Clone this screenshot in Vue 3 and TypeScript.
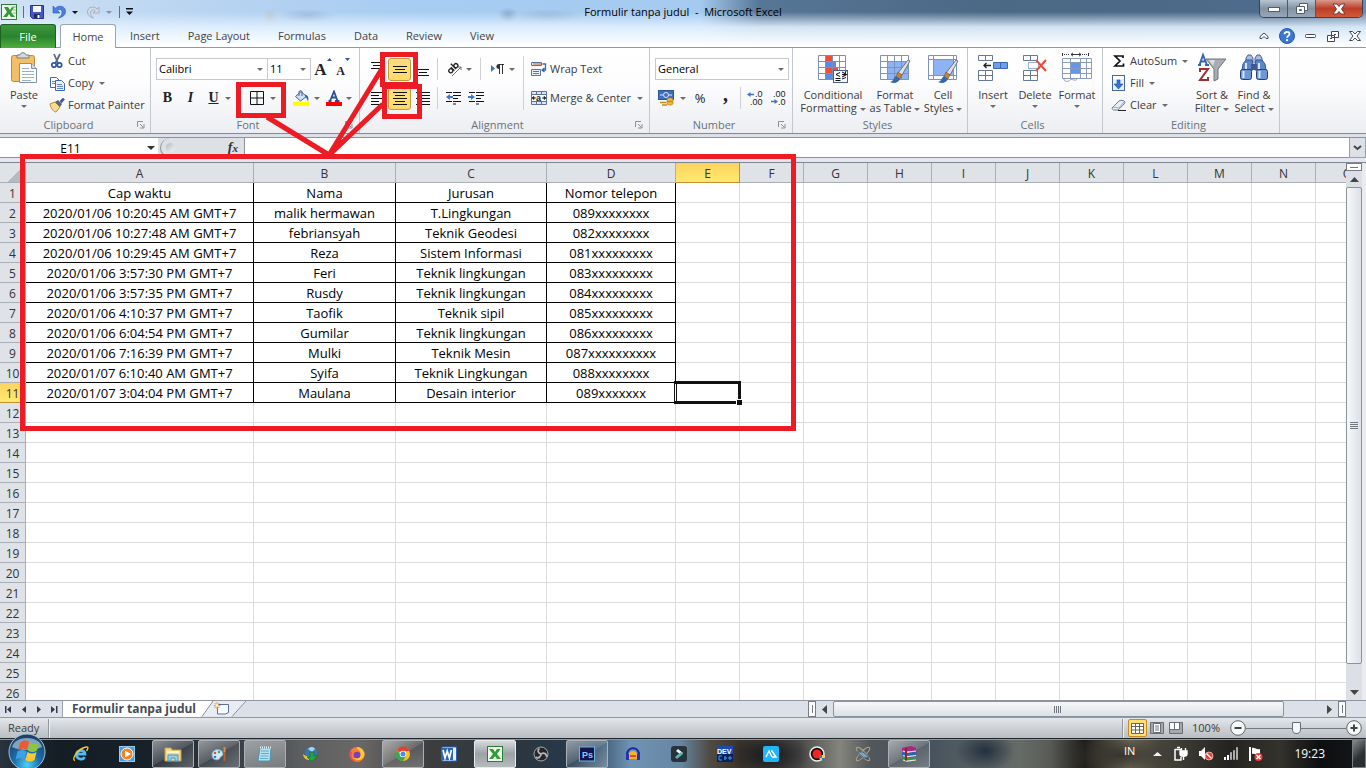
<script setup lang="ts">
import { ref } from 'vue'

interface Column {
  name: string
  cls: string
}

const columns: Column[] = [
  { name: 'A', cls: 'col-a' },
  { name: 'B', cls: 'col-b' },
  { name: 'C', cls: 'col-c' },
  { name: 'D', cls: 'col-d' },
  ...'EFGHIJKLMNO'.split('').map((name) => ({ name, cls: 'col-std' })),
]

const data: string[][] = [
  ['Cap waktu', 'Nama', 'Jurusan', 'Nomor telepon'],
  ['2020/01/06 10:20:45 AM GMT+7', 'malik hermawan', 'T.Lingkungan', '089xxxxxxxx'],
  ['2020/01/06 10:27:48 AM GMT+7', 'febriansyah', 'Teknik Geodesi', '082xxxxxxxx'],
  ['2020/01/06 10:29:45 AM GMT+7', 'Reza', 'Sistem Informasi', '081xxxxxxxxx'],
  ['2020/01/06 3:57:30 PM GMT+7', 'Feri', 'Teknik lingkungan', '083xxxxxxxxx'],
  ['2020/01/06 3:57:35 PM GMT+7', 'Rusdy', 'Teknik lingkungan', '084xxxxxxxxx'],
  ['2020/01/06 4:10:37 PM GMT+7', 'Taofik', 'Teknik sipil', '085xxxxxxxxx'],
  ['2020/01/06 6:04:54 PM GMT+7', 'Gumilar', 'Teknik lingkungan', '086xxxxxxxxx'],
  ['2020/01/06 7:16:39 PM GMT+7', 'Mulki', 'Teknik Mesin', '087xxxxxxxxxx'],
  ['2020/01/07 6:10:40 AM GMT+7', 'Syifa', 'Teknik Lingkungan', '088xxxxxxxx'],
  ['2020/01/07 3:04:04 PM GMT+7', 'Maulana', 'Desain interior', '089xxxxxxx'],
]

const rowCount = 26
const tabs = ['Insert', 'Page Layout', 'Formulas', 'Data', 'Review', 'View']

const nameBox = ref('E11')
const formula = ref('')
const font = ref('Calibri')
const size = ref('11')
const numberFormat = ref('General')
const zoom = ref(100)

const isActive = (row: number, col: number) => row === 11 && col === 4
</script>

<template>
  <div class="desktop">
    <header class="top">
      <div class="titlebar">
        <div class="quick">
          <svg width="16" height="16" viewBox="0 0 16 16"><rect x=".5" y=".5" width="15" height="15" fill="#eef7ea" stroke="#2e7d32" /><path d="M3 3h4l2 3 2-3h2.500L10 8l4 5h-4L8 10l-2 3H2l4-5z" fill="#2f9a3a" /><path d="M11 3h4M12 6h3M12 9h3" stroke="#7fbf7a" /></svg>
          <span class="vline"></span>
          <button aria-label="Save"><svg width="14" height="14" viewBox="0 0 14 14"><path d="M.5.5h13v13h-11l-2-2z" fill="#4a55c8" stroke="#2a3290" /><path d="M3 1h8v6H3z" fill="#f4f7ff" /><path d="M4 9h6v4H4z" fill="#222a60" /><path d="M7.500 10h2v3h-2z" fill="#fff" /></svg></button>
          <button class="undo" aria-label="Undo"><svg width="14" height="14" viewBox="0 0 14 14"><path d="M1 1v7h7L5.500 5.500C8 3.500 10 4.500 10 7.500c0 2-1 3.500-3.500 5.500 5-1 7-3.500 7-6.700C13.500 1 7-.5 3.200 3.200z" fill="#4a7fe0" stroke="#2a58b0" stroke-width=".6" /></svg></button>
          <i class="dd dark"></i>
          <button class="redo" aria-label="Redo"><svg width="13" height="13" viewBox="0 0 13 13"><path d="M12 1v6H6l2.200-2.200C6 3 3.500 4 3.500 7c0 2 1 3.500 3 5C2.500 11 .5 9 .5 5.800.5 1 6.500-.5 10 3z" fill="#d3dae2" stroke="#9aa7b6" stroke-width=".8" /></svg></button>
          <i class="dd pale"></i>
          <span class="vline"></span>
          <svg width="8" height="8" viewBox="0 0 8 8"><path d="M0 0h7v1.500H0zM0 3.500h7L3.500 7z" fill="#111" /></svg>
        </div>
        <span class="title">Formulir tanpa judul&nbsp; -&nbsp; Microsoft Excel</span>
        <div class="winctl">
          <button aria-label="Minimize"><svg width="14" height="8" viewBox="0 0 14 8"><rect x="1.500" y="2.500" width="11" height="4" fill="#fff" stroke="#555e6a" /></svg></button>
          <button aria-label="Restore"><svg width="14" height="13" viewBox="0 0 14 13"><path d="M4.500 1.500h8v7h-8z" fill="#fff" stroke="#555e6a" /><path d="M1.500 4.500h8v7h-8z" fill="#fff" stroke="#555e6a" /><path d="M4.500 7.500h2v1h-2z" fill="#fff" stroke="#555e6a" /></svg></button>
          <button class="close" aria-label="Close"><svg width="14" height="12" viewBox="0 0 14 12"><path d="M1 1h4l2 2.500L9 1h4L9.500 6l3.500 5H9L7 8.500 5 11H1l3.500-5z" fill="#fff" stroke="#6b3b3b" /></svg></button>
        </div>
      </div>
      <nav class="tabs">
        <button class="tab file">File</button>
        <button class="tab home">Home</button>
        <button v-for="t in tabs" :key="t" class="tab">{{ t }}</button>
        <span class="fill"></span>
        <div class="helpbar">
          <svg width="10" height="8" viewBox="0 0 10 8"><path d="M1 6.500V4.500L5 1l4 3.500v2H7L5 4.500 3 6.500z" fill="#fff" stroke="#445" /></svg>
          <svg width="16" height="16" viewBox="0 0 16 16"><circle cx="8" cy="8" r="7.500" fill="#3b76d0" stroke="#2c5aa6" /><path d="M5.500 6.300C5.500 3 10.500 3 10.500 6 10.500 7.800 8 8 8 9.800" fill="none" stroke="#fff" stroke-width="1.800" /><circle cx="8" cy="12.200" r="1.100" fill="#fff" /></svg>
          <svg width="12" height="6" viewBox="0 0 12 6"><rect x=".5" y="1.500" width="10" height="3" rx="1" fill="#fff" stroke="#445" /></svg>
          <svg width="12" height="11" viewBox="0 0 12 11"><path d="M4.500.5h7v6h-7zM.5 4.500h7v6h-7z" fill="#fff" stroke="#445" /><path d="M3 7.500h2M7 3.500h2" stroke="#445" /></svg>
          <svg width="12" height="10" viewBox="0 0 12 10"><path d="M.5.5h3L6 3 8.500.5h3L8 5l3.500 4.500h-3L6 7 3.500 9.500h-3L4 5z" fill="#fff" stroke="#445" /></svg>
        </div>
      </nav>
    </header>

    <section class="ribbon">
      <div class="group clipboard">
        <div class="body">
          <button class="big paste">
            <svg width="28" height="32" viewBox="0 0 28 32"><rect x="1.500" y="3.500" width="23" height="26" rx="2" fill="#f0bf68" stroke="#c4873a" /><path d="M7 6V3h3c0-3 6-3 6 0h3v3z" fill="#d5d8dc" stroke="#777e88" /><path d="M9.500 11.500h12l5 5v14h-17z" fill="#fbfdff" stroke="#7f93ad" /><path d="M21.500 11.500v5h5" fill="#cfdcea" stroke="#7f93ad" /><path d="M12 16.500h7M12 19.500h12M12 22.500h12M12 25.500h12M12 28.500h9" stroke="#9db0c8" /></svg>
            <span>Paste</span><i class="dd"></i>
          </button>
          <div class="stack">
            <button><svg width="16" height="16" viewBox="0 0 16 16"><path d="M5 1l4 9M11 1L6.500 10" stroke="#5c6c80" stroke-width="1.800" /><circle cx="5" cy="12" r="2.200" fill="none" stroke="#2a57a8" stroke-width="1.700" /><circle cx="10.500" cy="12" r="2.200" fill="none" stroke="#2a57a8" stroke-width="1.700" /></svg>Cut</button>
            <button><svg width="16" height="16" viewBox="0 0 16 16"><path d="M1.500 2.500h6l3 3v7h-9z" fill="#fff" stroke="#3f68ac" /><path d="M6.500 5.500h6l3 3v7h-9z" fill="#e8f0ff" stroke="#3f68ac" /><path d="M3 6.500h3M3 8.500h3M8 9.500h5M8 11.500h6M8 13.500h6" stroke="#5f89cf" /></svg>Copy<i class="dd"></i></button>
            <button><svg width="16" height="16" viewBox="0 0 16 16"><path d="M1 7l5-2 5 5-4 5c-2 0-5-3-6-8z" fill="#f6dc91" stroke="#b78b35" /><path d="M6 5l3-2 4 4-2 3z" fill="#5b6470" /><path d="M11 4l3-3 1.500 1.500L12.500 6z" fill="#4c4ca0" stroke="#333d70" stroke-width=".5" /></svg>Format Painter</button>
          </div>
        </div>
        <div class="caption"><span>Clipboard</span><svg width="8" height="8" viewBox="0 0 8 8"><path d="M.5 6V.5H6M3 3l3.500 3.500M7 3v4H3" fill="none" stroke="#8a9099" /></svg></div>
      </div>

      <div class="group font">
        <div class="body rows">
          <div class="row">
            <label class="combo fontname"><select v-model="font" aria-label="Font"><option>Calibri</option></select><i class="dd"></i></label>
            <label class="combo fontsize"><select v-model="size" aria-label="Font size"><option>11</option></select><i class="dd"></i></label>
            <button class="ib grow first" aria-label="Grow font"><span class="serif s16">A</span><svg width="5" height="3" viewBox="0 0 5 3"><path d="M0 3L2.500 0 5 3z" fill="#2d55a5" /></svg></button>
            <button class="ib grow" aria-label="Shrink font"><span class="serif s12">A</span><svg width="5" height="3" viewBox="0 0 5 3"><path d="M0 0h5L2.500 3z" fill="#2d55a5" /></svg></button>
          </div>
          <div class="row">
            <button class="ib serif s14">B</button>
            <button class="ib serif s14 ital">I</button>
            <button class="ib serif s14 under">U</button><i class="dd"></i>
            <button class="ib borders" aria-label="All borders"><svg width="14" height="14" viewBox="0 0 14 14"><path d="M.5.500h13v13H.5zM7 .5v13M.5 7h13" fill="none" stroke="#111" /></svg><i class="dd"></i></button>
            <button class="ib fillc" aria-label="Fill color"><svg width="17" height="16" viewBox="0 0 17 16"><path d="M2.500 6.500l5.500-5 5.500 5-6 4.500z" fill="#cfe0f7" stroke="#45648f" /><path d="M6 6V2c0-1.800 3-1.800 3 0v4" fill="none" stroke="#45648f" /><path d="M12 4.500c3.500 1 4 4 3 7-1-2.500-1.500-4-3-5z" fill="#2f62b5" /><path d="M0 12h16v4H0z" fill="#ff0" /></svg><i class="dd"></i></button>
            <button class="ib fontc" aria-label="Font color"><svg width="16" height="16" viewBox="0 0 16 16"><path d="M2.500 11h3M9 11h4.500M4 11L8 1.500 11.500 11M5.500 7.500h5" fill="none" stroke="#2c4f94" stroke-width="1.800" /><path d="M0 12h16v4H0z" fill="#f00" /></svg><i class="dd"></i></button>
          </div>
        </div>
        <div class="caption"><span>Font</span><svg width="8" height="8" viewBox="0 0 8 8"><path d="M.5 6V.5H6M3 3l3.500 3.500M7 3v4H3" fill="none" stroke="#8a9099" /></svg></div>
      </div>

      <div class="group align">
        <div class="body">
          <div class="rows">
            <div class="row">
              <button class="al" aria-label="Top align"><svg width="14" height="14" viewBox="0 0 14 14"><path d="M1 .5h12M3 3.500h8M1 6.500h12" stroke="#111" /></svg></button>
              <button class="al on" aria-label="Middle align"><svg width="14" height="14" viewBox="0 0 14 14"><path d="M0 4.500h14M2 7.500h10M0 10.500h14" stroke="#111" /></svg></button>
              <button class="al" aria-label="Bottom align"><svg width="14" height="14" viewBox="0 0 14 14"><path d="M1 7.500h12M3 10.500h8M1 13.500h12" stroke="#111" /></svg></button>
              <span class="sep"></span>
              <button class="ib wide" aria-label="Orientation"><svg width="16" height="16" viewBox="0 0 16 16" fill="none" stroke="#222" stroke-width="1.300"><g transform="rotate(-45 7 8)"><circle cx="3.500" cy="7" r="2" /><path d="M6 4.500v5M8.500 2v7.500" /><circle cx="10.700" cy="7" r="2" /></g><path d="M5 15l9-9M11 6h3v3" stroke="#66707c" stroke-width="1" /></svg><i class="dd"></i></button>
              <span class="sep"></span>
              <button class="ib wide" aria-label="Text direction"><svg width="16" height="12" viewBox="0 0 16 12"><path d="M1 2l4 3.500L1 9z" fill="#3f72c5" /><path d="M9.500 11V1.500M12.500 11V1.500M14 1.500H9" fill="none" stroke="#333" /><path d="M9 1C5.500 1 5.500 6 9 6z" fill="#333" /></svg><i class="dd"></i></button>
            </div>
            <div class="row">
              <button class="al" aria-label="Align left"><svg width="14" height="14" viewBox="0 0 14 14"><path d="M1 1.500h12M1 4.500h8M1 7.500h12M1 10.500h8M1 13.500h12" stroke="#111" /></svg></button>
              <button class="al on" aria-label="Center"><svg width="14" height="14" viewBox="0 0 14 14"><path d="M0 1.500h14M2 4.500h10M0 7.500h14M2 10.500h10M0 13.500h14" stroke="#111" /></svg></button>
              <button class="al" aria-label="Align right"><svg width="14" height="14" viewBox="0 0 14 14"><path d="M0 1.500h14M4 4.500h10M0 7.500h14M4 10.500h10M0 13.500h14" stroke="#111" /></svg></button>
              <span class="sep"></span>
              <button class="ib" aria-label="Decrease indent"><svg width="16" height="14" viewBox="0 0 16 14"><path d="M1 1.500h6M8 1.500h8M8 4.500h8M8 7.500h5M1 10.500h6M8 10.500h8M8 13h3" stroke="#111" /><path d="M5 3L1 6l4 3V7h3V5H5z" fill="#3f78d5" /></svg></button>
              <button class="ib" aria-label="Increase indent"><svg width="16" height="14" viewBox="0 0 16 14"><path d="M1 1.500h6M8 1.500h8M8 4.500h8M8 7.500h5M1 10.500h6M8 10.500h8M8 13h3" stroke="#111" /><path d="M3 3l4 3-4 3V7H0V5h3z" fill="#3f78d5" /></svg></button>
            </div>
          </div>
          <span class="sep tall"></span>
          <div class="rows">
            <div class="row"><button class="txt"><svg width="16" height="16" viewBox="0 0 16 16"><path d="M.5 1.500h10v3H.5zM.5 8.500h9v6h-9z" fill="#eef4ff" stroke="#5a7099" /><path d="M2 3h10" stroke="#c3551d" /><path d="M2 10.500h6M2 12.500h6" stroke="#c3551d" /><path d="M12 3h2.500v6H12M13.500 7l-2.500 2 2.500 2" fill="none" stroke="#3969b5" stroke-width="1.300" /></svg>Wrap Text</button></div>
            <div class="row"><button class="txt"><svg width="16" height="16" viewBox="0 0 16 16"><path d="M.5 1.500h15v13H.5zM.5 4.500h15M.5 11.500h15M5.500 1.500v3M10.500 1.500v3M5.500 11.500v3M10.500 11.500v3" fill="#d8e5fa" stroke="#5d7298" /><path d="M1 5h14v6H1z" fill="#fff" /><text x="5" y="10.500" font-family="Liberation Sans" font-size="9" font-weight="bold" fill="#222">a</text><path d="M1 8l2-1.500v3zM15 8l-2-1.500v3zM2 8h3M11 8h3" stroke="#222" stroke-width=".8" fill="#222" /></svg>Merge &amp; Center<i class="dd"></i></button></div>
          </div>
        </div>
        <div class="caption"><span>Alignment</span><svg width="8" height="8" viewBox="0 0 8 8"><path d="M.5 6V.5H6M3 3l3.500 3.500M7 3v4H3" fill="none" stroke="#8a9099" /></svg></div>
      </div>

      <div class="group number">
        <div class="body rows">
          <div class="row"><label class="combo numfmt"><select v-model="numberFormat" aria-label="Number format"><option>General</option></select><i class="dd"></i></label></div>
          <div class="row">
            <button class="ib money" aria-label="Accounting format"><svg width="17" height="16" viewBox="0 0 17 16"><rect x=".5" y=".5" width="15" height="9" fill="#3d6fbe" stroke="#2c549a" /><circle cx="8" cy="5" r="2.500" fill="none" stroke="#dce9ff" /><path d="M2 5h3M11 5h3" stroke="#dce9ff" /><path d="M9 9.500c0-2 6-2 6 0v4c0 2-6 2-6 0z" fill="#f1b93c" stroke="#a87315" stroke-width=".6" /><path d="M9 11.500h6M2 12.500h6M4 15h5" stroke="#c68a1b" stroke-width="1.600" /></svg><i class="dd"></i></button>
            <button class="ib pct">%</button>
            <button class="ib serif s20" aria-label="Comma style">,</button>
            <span class="sep"></span>
            <button class="ib" aria-label="Increase decimal"><svg width="18" height="14" viewBox="0 0 18 14" font-family="Liberation Sans" font-size="9" fill="#222"><path d="M0 3.500L3.500 1v1.700H7v1.600H3.500V6z" fill="#3f72c5" /><text x="8" y="6">.0</text><text x="3" y="14">.00</text></svg></button>
            <button class="ib" aria-label="Decrease decimal"><svg width="18" height="14" viewBox="0 0 18 14" font-family="Liberation Sans" font-size="9" fill="#222"><path d="M8 10.500L4.500 8v1.700H1v1.600h3.500V13z" fill="#3f72c5" /><text x="3" y="6">.00</text><text x="8" y="14">.0</text></svg></button>
          </div>
        </div>
        <div class="caption"><span>Number</span><svg width="8" height="8" viewBox="0 0 8 8"><path d="M.5 6V.5H6M3 3l3.500 3.500M7 3v4H3" fill="none" stroke="#8a9099" /></svg></div>
      </div>

      <div class="group styles">
        <div class="body">
          <button class="big cond">
            <svg width="32" height="32" viewBox="0 0 32 32"><path d="M1.500 3.500h27v24h-27z" fill="#fff" /><path d="M8 4h7v6H8zM8 16h13v6H8z" fill="#ee4d36" /><path d="M8 10h11v6H8zM8 22h7v6H8z" fill="#5a8ae6" /><path d="M1.500 3.500h27v24h-27zM1.500 9.500h27M1.500 15.500h27M1.500 21.500h27M8.500 3.500v24M15.500 3.500v24M22.500 3.500v24" fill="none" stroke="#7c8fb0" /><rect x="16.500" y="18.500" width="14" height="12" fill="#f8faff" stroke="#4c6080" /><path d="M23 20.500l-4 2 4 2M18.500 26.500h5M18.500 28.500h5M25 20l4 2M25 22.500h5M25 25l4-2M25 27l4-1.500M29 19l-2 5" fill="none" stroke="#111" /></svg>
            <span>Conditional</span><span>Formatting <i class="dd"></i></span>
          </button>
          <button class="big fat">
            <svg width="32" height="32" viewBox="0 0 32 32"><path d="M1.500 3.500h28v24h-28z" fill="#fff" /><path d="M8 10h21v18H8z" fill="#8db3f4" /><path d="M1.500 3.500h28v24h-28zM1.500 9.500h28M1.500 15.500h28M1.500 21.500h28M8.500 3.500v24M15.500 3.500v24M22.500 3.500v24" fill="none" stroke="#7c93bb" /><path d="M29 8l2 1-8 14-4-2z" fill="#dde1e6" stroke="#6d7580" /><path d="M19 20l4 3-2 4-4-2z" fill="#c48537" stroke="#7d5321" stroke-width=".6" /><path d="M17 24l4 3c-2 4-6 5-10 3 4-1 3-4 6-6z" fill="#3568ad" /></svg>
            <span>Format</span><span>as Table <i class="dd"></i></span>
          </button>
          <button class="big cst">
            <svg width="32" height="32" viewBox="0 0 32 32"><path d="M1.500 3.500h28v24h-28z" fill="#fff" /><path d="M7 8h19v15H7z" fill="#8db3f4" /><path d="M1.500 3.500h28v24h-28zM1.500 7.500h28M1.500 23.500h28M6.500 3.500v24M26.500 3.500v24" fill="none" stroke="#7c93bb" /><path d="M29 8l2 1-8 14-4-2z" fill="#dde1e6" stroke="#6d7580" /><path d="M19 20l4 3-2 4-4-2z" fill="#c48537" stroke="#7d5321" stroke-width=".6" /><path d="M17 24l4 3c-2 4-6 5-10 3 4-1 3-4 6-6z" fill="#3568ad" /></svg>
            <span>Cell</span><span>Styles <i class="dd"></i></span>
          </button>
        </div>
        <div class="caption"><span>Styles</span></div>
      </div>

      <div class="group cells">
        <div class="body">
          <button class="big">
            <svg width="32" height="32" viewBox="0 0 32 32"><path d="M1.500 3.500h14v5h-14zM8.500 3.500v5M1.500 18.500h14v10h-14zM8.500 18.500v10M1.500 23.500h14" fill="#fff" stroke="#66799b" /><path d="M16.500 10.500h14v6h-14zM23.500 10.500v6" fill="#6e9eee" stroke="#3f67ad" /><path d="M7 13.500h7M9.500 11L7 13.500 9.500 16" fill="none" stroke="#222" stroke-width="1.400" /></svg>
            <span>Insert</span><i class="dd"></i>
          </button>
          <button class="big">
            <svg width="32" height="32" viewBox="0 0 32 32"><path d="M4.500 3.500h14v5h-14zM11.500 3.500v5M4.500 18.500h14v10h-14zM11.500 18.500v10M4.500 23.500h14" fill="#fff" stroke="#66799b" /><path d="M9.500 10.500h10v6h-10z" fill="none" stroke="#2d5cb8" stroke-dasharray="1 1" /><path d="M17 8l10 11M27 8L17 19" stroke="#f04a32" stroke-width="2" /></svg>
            <span>Delete</span><i class="dd"></i>
          </button>
          <button class="big">
            <svg width="32" height="32" viewBox="0 0 32 32"><path d="M1.500 1v3M27.500 1v3M10 2.500h10M12 .8l-2 1.700 2 1.700M18 .8l2 1.700-2 1.700" fill="none" stroke="#333" /><path d="M3 2.500h6M21 2.500h6" stroke="#333" stroke-dasharray="1 1" /><path d="M1.500 6.500h29v20h-29z" fill="#fff" /><path d="M10 11h9v11h-9z" fill="#6496ee" /><path d="M1.500 6.500h29v20h-29zM1.500 10.500h29M1.500 16.500h29M1.500 21.500h29M9.500 6.500v20M19.500 6.500v20M25.500 6.500v20M3 27c0 3 5 3 6 1s6 2 7-1" fill="none" stroke="#8b9cba" /></svg>
            <span>Format</span><i class="dd"></i>
          </button>
        </div>
        <div class="caption"><span>Cells</span></div>
      </div>

      <div class="group editing">
        <div class="body">
          <div class="stack">
            <button><svg width="16" height="16" viewBox="0 0 16 16"><path d="M12 5V3H4l5 5-5 5h8.500v-2.500" fill="none" stroke="#111" stroke-width="1.700" /></svg>AutoSum<i class="dd"></i></button>
            <button><svg width="16" height="16" viewBox="0 0 16 16"><rect x="1.500" y=".5" width="12" height="15" fill="#e7effd" stroke="#4a6797" /><path d="M2 1h11v3H2z" fill="#fff" /><path d="M6 5h3v4h3l-4.500 5L3 9h3z" fill="#356fd8" stroke="#1c4ea8" stroke-width=".6" /></svg>Fill<i class="dd"></i></button>
            <button><svg width="16" height="16" viewBox="0 0 16 16"><path d="M1 11l7-7c1-1 5-1 6 1 0 2-6 7-7 8H3c-1 0-2-1-2-2z" fill="#e9eef5" stroke="#6c7c94" /><path d="M2 10l6 1 5-6" fill="none" stroke="#9aa9be" /><path d="M7 13.500h8" stroke="#222" /></svg>Clear<i class="dd"></i></button>
          </div>
          <button class="big">
            <svg width="32" height="32" viewBox="0 0 32 32"><path d="M2 13h3M9 13h4M3.500 13L7 3l4 10M5 9.500h5" fill="none" stroke="#3566b4" stroke-width="2" /><path d="M4 20v-3h8L4 28h8v-3" fill="none" stroke="#9d3034" stroke-width="2" /><path d="M10 7h20l-8 10v10l-4 2V17z" fill="#a9adb1" stroke="#6f747a" /><path d="M13 8h6l-2 6z" fill="#dcdee0" /></svg>
            <span>Sort &amp;</span><span>Filter <i class="dd"></i></span>
          </button>
          <button class="big">
            <svg width="32" height="32" viewBox="0 0 32 32"><path d="M8 6l2-3h3l2 3v5H8zM17 6l2-3h3l2 3v5h-7z" fill="#a9bde0" stroke="#45659d" /><path d="M5 12l3-4h6l1 4v6H4zM17 12l1-4h6l3 4 1 6H17z" fill="#5f86c8" stroke="#34568f" /><path d="M13 12h6v6h-6z" fill="#3d5a92" /><rect x="2.500" y="17.500" width="11" height="10" rx="2" fill="#6f97d6" stroke="#263f75" /><rect x="18.500" y="17.500" width="11" height="10" rx="2" fill="#6f97d6" stroke="#263f75" /><path d="M5.500 19v7M21.500 19v7M8 11v6M21 11v6" stroke="#d8e6fb" stroke-width="2" /></svg>
            <span>Find &amp;</span><span>Select <i class="dd"></i></span>
          </button>
        </div>
        <div class="caption"><span>Editing</span></div>
      </div>
    </section>

    <section class="formulabar">
      <label class="namebox"><input v-model="nameBox" aria-label="Name box" /><i class="dd big-dd"></i></label>
      <div class="fxzone"><span class="knob"></span><button class="fx" aria-label="Insert function"><i>f</i><small>x</small></button></div>
      <input v-model="formula" class="formula" aria-label="Formula" />
      <button class="expand" aria-label="Expand formula bar"><svg width="9" height="6" viewBox="0 0 9 6"><path d="M1 1l3.500 3L8 1" fill="none" stroke="#444" stroke-width="2" /></svg></button>
    </section>

    <main class="sheet">
      <div class="gridwrap">
        <table class="grid">
          <colgroup><col class="col-row" /><col v-for="c in columns" :key="c.name" :class="c.cls" /></colgroup>
          <thead>
            <tr>
              <th class="corner"></th>
              <th v-for="c in columns" :key="c.name" scope="col" :class="{ hot: c.name === 'E' }">{{ c.name }}</th>
            </tr>
          </thead>
          <tbody>
            <tr v-for="r in rowCount" :key="r">
              <th scope="row" :class="{ hot: r === 11 }">{{ r }}</th>
              <td v-for="(c, i) in columns" :key="c.name" :class="{ filled: r <= data.length && i < 4, active: isActive(r, i) }">{{ data[r - 1]?.[i] }}</td>
            </tr>
          </tbody>
        </table>
      </div>
      <div class="vscroll">
        <span class="split"></span>
        <button aria-label="Scroll up"><svg width="9" height="5" viewBox="0 0 9 5"><path d="M0 5l4.500-5L9 5z" fill="#444" /></svg></button>
        <div class="vthumb"><i></i></div>
        <span class="vtrack"></span>
        <button aria-label="Scroll down"><svg width="9" height="5" viewBox="0 0 9 5"><path d="M0 0h9L4.500 5z" fill="#444" /></svg></button>
      </div>
    </main>

    <section class="sheettabs">
      <div class="navs">
        <button aria-label="First sheet"><svg width="8" height="7" viewBox="0 0 8 7"><path d="M0 0h1.500v7H0zM6 0v7L2 3.500z" fill="#333c4a" /></svg></button>
        <button aria-label="Previous sheet"><svg width="8" height="7" viewBox="0 0 8 7"><path d="M6 0v7L2 3.500z" fill="#333c4a" /></svg></button>
        <button aria-label="Next sheet"><svg width="8" height="7" viewBox="0 0 8 7"><path d="M2 0v7l4-3.500z" fill="#333c4a" /></svg></button>
        <button aria-label="Last sheet"><svg width="8" height="7" viewBox="0 0 8 7"><path d="M1 0v7l4-3.500zM6 0h1.500v7H6z" fill="#333c4a" /></svg></button>
      </div>
      <button class="stab">Formulir tanpa judul</button>
      <svg class="newtab" width="48" height="16" viewBox="0 0 48 16"><path d="M0 0h13L2 15.500H0z" fill="#fff" /><path d="M13 0L2 15.500h30L46 0z" fill="#e9ecf2" /><path d="M13 0L2 15.500M46 0L32 15.500" fill="none" stroke="#8b919c" /><path d="M17.500 3.500h11v8l-3 1.500h-8z" fill="#f7faff" stroke="#5c6e94" /><path d="M17 1v7M13.500 4.500h7M14.500 2l5 5M19.500 2l-5 5" stroke="#ee9a35" /><circle cx="17" cy="4.500" r="1.400" fill="#fff2ae" /></svg>
      <span class="fill"></span>
      <div class="hscroll">
        <span class="hsplit"></span>
        <button aria-label="Scroll left"><svg width="5" height="9" viewBox="0 0 5 9"><path d="M5 0v9L0 4.500z" fill="#444" /></svg></button>
        <div class="hthumb"><i></i></div>
        <span class="htrack"></span>
        <button aria-label="Scroll right"><svg width="5" height="9" viewBox="0 0 5 9"><path d="M0 0v9l5-4.500z" fill="#444" /></svg></button>
        <span class="hsplit"></span>
      </div>
    </section>

    <footer class="status">
      <span class="ready">Ready</span>
      <span class="vsep"></span>
      <span class="fill"></span>
      <span class="vsep"></span>
      <button class="view on" aria-label="Normal view"><svg width="13" height="11" viewBox="0 0 13 11"><path d="M.5.500h12v10H.5zM4.500.500v10M8.500.500v10M.5 3.500h12M.5 7h12" fill="#fff" stroke="#6a6450" /></svg></button>
      <button class="view" aria-label="Page layout view"><svg width="14" height="12" viewBox="0 0 14 12"><path d="M.5.500h13v11H.5z" fill="#a4a9af" stroke="#696e75" /><path d="M3.500 1.500h7v9h-7z" fill="#fff" stroke="#696e75" /><path d="M5 4h4M5 6h4M5 8h4" stroke="#777" /></svg></button>
      <button class="view" aria-label="Page break view"><svg width="14" height="12" viewBox="0 0 14 12"><path d="M.5.500h13v11H.5z" fill="#a4a9af" stroke="#696e75" /><path d="M1 1h4v6H1zM6 1h4v6H6z" fill="#fff" /><path d="M5.500 0v7.500M10.500 0v7.500H0" fill="none" stroke="#696e75" /></svg></button>
      <button class="pct-btn">100%</button>
      <button class="circle" aria-label="Zoom out"><svg width="16" height="16" viewBox="0 0 16 16"><circle cx="8" cy="8" r="7.300" fill="#f7f8fa" stroke="#5e646c" /><path d="M4.500 8h7" stroke="#444" stroke-width="2" /></svg></button>
      <input v-model="zoom" class="zoom" type="range" min="10" max="190" aria-label="Zoom" />
      <button class="circle" aria-label="Zoom in"><svg width="16" height="16" viewBox="0 0 16 16"><circle cx="8" cy="8" r="7.300" fill="#f7f8fa" stroke="#5e646c" /><path d="M4.500 8h7M8 4.500v7" stroke="#444" stroke-width="2" /></svg></button>
    </footer>

    <nav class="taskbar">
      <button class="start" aria-label="Start"><svg width="38" height="36" viewBox="0 0 38 36"><defs><radialGradient id="orb" cx=".5" cy=".85" r=".8"><stop offset="0" stop-color="#4fd0f5" /><stop offset=".45" stop-color="#1b6fae" /><stop offset="1" stop-color="#1d3f66" /></radialGradient></defs><circle cx="19" cy="19" r="18" fill="url(#orb)" stroke="#9cc4dc" /><path d="M4 14C7 2 31 2 34 14c-8 4-22 4-30 0z" fill="#b8cfe0" opacity=".65" /><path d="M12 10c3-3 6-3 9-1l-2 8c-3-2-6-2-9 0z" fill="#ee5a2c" /><path d="M22 9.500c3 2 6 2 9 0l-2 8c-3 2-6 2-9 0z" fill="#8cc63f" /><path d="M9.500 18.500c3-2 6-2 9 0l-2 8c-3-2-6-2-9 0z" fill="#3fa0e8" /><path d="M19.500 19c3 2 6 2 9 0l-2 8c-3 2-6 2-9 0z" fill="#fcc92f" /></svg></button>
      <div class="apps">
        <button aria-label="Internet Explorer"><svg width="18" height="18" viewBox="0 0 18 18"><path d="M12.500 12c-1.500 3.500-8 2.500-8-2.500s8.500-5.500 8.500-.3H5" fill="none" stroke="#4dbcf4" stroke-width="2.800" /><path d="M3 15.500C-1 15 5 4 14 2c3-.5 2 2 .5 4" fill="none" stroke="#f4c33a" stroke-width="1.400" /></svg></button>
        <button aria-label="Media Player"><svg width="16" height="16" viewBox="0 0 16 16"><rect x=".5" y=".5" width="15" height="15" fill="#4f9cdd" stroke="#98caee" /><circle cx="8" cy="8" r="6" fill="#f58220" stroke="#fff" /><path d="M6 4.500v7l6-3.500z" fill="#fff" /></svg></button>
        <button class="open" aria-label="Explorer"><svg width="18" height="16" viewBox="0 0 18 16"><path d="M1 2h6l1 2h9v11H1z" fill="#f2d98a" stroke="#c7a14c" /><path d="M3 6h12" stroke="#fff7d0" stroke-width="2" /><path d="M4 15V9h10v6h-3v-3H7v3z" fill="#8fd0f3" stroke="#4f95c6" /></svg></button>
        <button class="open" aria-label="Paint"><svg width="16" height="16" viewBox="0 0 16 16"><path d="M1 9c0-7 11-7 11-1 0 3-3 2-3 4s-8 4-8-3z" fill="#d5eaf8" stroke="#6fa8d2" /><circle cx="4" cy="7" r="1.300" fill="#e64c3c" /><circle cx="8" cy="6" r="1.300" fill="#41a85f" /><circle cx="4" cy="11" r="1.300" fill="#2c82c9" /><path d="M12.500 1h2v5h-2z" fill="#e8883a" /><path d="M13.500 6v9" stroke="#b8622a" stroke-width="2" /></svg></button>
        <button class="open lit" aria-label="Notepad"><svg width="16" height="16" viewBox="0 0 16 16"><path d="M3 2h11l-1 13H1z" fill="#b5e3f2" stroke="#4c93ad" /><path d="M4 5h8M4 7.500h8M3.500 10h8M3 12.500h8" stroke="#5da9c6" /><path d="M3 1.500h11" stroke="#eee" stroke-width="2" stroke-dasharray="1 1" /></svg></button>
        <button aria-label="Download Manager"><svg width="18" height="16" viewBox="0 0 18 16"><circle cx="9" cy="7" r="6" fill="#3777b8" /><path d="M6 3c3-3 6-2 7 0l-3 3z" fill="#9fd6ef" /><path d="M1 8c2 2 5 3 7 3l-1 3C4 14 1 11 1 8z" fill="#e7c92f" /><path d="M8 6h4v4h4l-6 6-5-5h3z" fill="#26a148" stroke="#0d6a28" stroke-width=".6" /></svg></button>
        <button aria-label="Firefox"><svg width="16" height="16" viewBox="0 0 16 16"><circle cx="8" cy="8.500" r="7.500" fill="#ff7b2e" /><path d="M8 1c4 0 8 4 7.500 8-1 6-9 6-11 3 5 1 8-1 7-5C11 4 8 4 8 1z" fill="#ffc83a" /><circle cx="8" cy="9" r="3.300" fill="#7542b8" /><path d="M1 4c-2 7 2 12 8 12-5-1-8-5-6-9z" fill="#f4406a" /></svg></button>
        <button class="open" aria-label="Chrome"><svg width="16" height="16" viewBox="0 0 16 16"><circle cx="8" cy="8" r="7" fill="#fbc116" /><path d="M8 8L2 4.400C5-1 12-.5 14.500 5H8z" fill="#e8402f" /><path d="M2 4.400C-1 9 2 15 8 15l3-5-3-2-2 1z" fill="#36a852" /><circle cx="8" cy="8" r="3.300" fill="#fff" /><circle cx="8" cy="8" r="2.500" fill="#4a8af4" /></svg></button>
        <button aria-label="Word"><svg width="16" height="16" viewBox="0 0 16 16"><rect x="1" y="1" width="14.500" height="14" fill="#e9f2ff" stroke="#2b63ba" /><path d="M0 2h12v12H0z" fill="#2865bd" /><path d="M2 4l2 8 2.200-7 2.200 7 2-8" fill="none" stroke="#fff" stroke-width="1.700" /></svg></button>
        <button class="open bright" aria-label="Excel"><svg width="16" height="16" viewBox="0 0 16 16"><rect x=".5" y=".5" width="15" height="15" fill="#eef7ea" stroke="#2e7d32" /><path d="M2 3h4l2 3 2-3h3.500L10 8l4 5h-4L8 10l-2 3H2l4-5z" fill="#2f9a3a" /></svg></button>
        <button aria-label="OBS"><svg width="16" height="16" viewBox="0 0 16 16"><circle cx="8" cy="8" r="7" fill="#25262a" stroke="#a8a8a8" /><path d="M8 8C5 7 4 4 6.500 2.500M8 8c3-2 6 0 5.500 3M8 8c0 3-3 5-5.500 3" fill="none" stroke="#b5b5b5" stroke-width="1.800" /></svg></button>
        <button class="open" aria-label="Photoshop"><svg width="16" height="16" viewBox="0 0 16 16"><rect x=".5" y="1" width="15" height="14" fill="#16144d" stroke="#64b5e8" /><text x="3" y="11.500" font-family="Liberation Sans" font-size="9" font-weight="bold" fill="#8bcaff">Ps</text></svg></button>
        <button aria-label="Audacity"><svg width="16" height="16" viewBox="0 0 16 16"><path d="M2 9C2 0 14 0 14 9" fill="none" stroke="#1725a8" stroke-width="2.200" /><path d="M4 13V8c1-4 7-4 8 0v5z" fill="#f8b422" /><path d="M5 9h6v2H5z" fill="#e8442f" /><rect x="1" y="8" width="3" height="6" fill="#1f31c4" /><rect x="12" y="8" width="3" height="6" fill="#1f31c4" /></svg></button>
        <button aria-label="Filmora"><svg width="16" height="16" viewBox="0 0 16 16"><rect width="16" height="16" rx="3" fill="#28323d" /><path d="M5 5l2-2 5 4-2 2z" fill="#f0f7f7" /><path d="M4 11l6-5 2 2-6 5z" fill="#55b8ac" /></svg></button>
        <button aria-label="Dev-C++"><svg width="16" height="16" viewBox="0 0 16 16"><rect width="16" height="16" fill="#1d4bb0" /><path d="M0 8h16v8H0z" fill="#0b2258" /><text x="0" y="7.500" font-family="Liberation Sans" font-size="7" font-weight="bold" fill="#fff">DEV</text><path d="M5 10H2v4h3M8 10v4M7 12h3M13 10v4M11 12h4" stroke="#3b9bf0" fill="none" /></svg></button>
        <button aria-label="Meeting app"><svg width="16" height="16" viewBox="0 0 16 16"><rect width="16" height="16" rx="2" fill="#21b6f8" /><path d="M3 11l3-6 3 6M8 5h1l4 6H9" fill="none" stroke="#fff" stroke-width="1.400" /></svg></button>
        <button aria-label="Recorder"><svg width="17" height="16" viewBox="0 0 17 16"><circle cx="8" cy="8" r="7" fill="#111" stroke="#eee" stroke-width="1.500" /><circle cx="8" cy="8" r="4.500" fill="#f02522" /><path d="M10 9h3v3h-3z" fill="#3a78c9" /><path d="M13 9h3v3h-3zM10 12h3v3z" fill="#f4cf3c" /><path d="M13 12h3l-3 3z" fill="#3a78c9" /></svg></button>
        <button aria-label="Atom tool"><svg width="16" height="16" viewBox="0 0 16 16" fill="none" stroke="#b3a78e"><ellipse cx="8" cy="8" rx="9" ry="2.500" transform="rotate(45 8 8)" /><ellipse cx="8" cy="8" rx="9" ry="2.500" transform="rotate(-45 8 8)" /><path d="M2 6l6 0 6 5-5 1z" fill="#78a6c4" stroke="#567" /></svg></button>
        <button class="open" aria-label="WinRAR"><svg width="16" height="16" viewBox="0 0 16 16"><path d="M1 2l9-2 5 2v3L6 6 1 5z" fill="#b02385" /><path d="M1 6l5 1 9-1v4l-9 1-5-1z" fill="#2c5dc0" /><path d="M1 11l5 1 9-1v3l-9 2-5-2z" fill="#2c9a4c" /><path d="M2 5l4 1.200 9-1.200M2 9.500l4 1.200 9-1.200M2 14l4 1.200 9-1.200" fill="none" stroke="#f2e8d8" stroke-width="1.200" /><path d="M4 1.500h2v13H4z" fill="#8a2438" /></svg></button>
      </div>
      <span class="fill"></span>
      <div class="tray">
        <span class="lang">IN</span>
        <svg width="9" height="6" viewBox="0 0 9 6"><path d="M0 5l4.500-4L9 5z" fill="#eaf1f8" /></svg>
        <svg width="16" height="15" viewBox="0 0 16 15"><path d="M2 3.500h6M4 1.500h3M2 3v11h6v-3" fill="none" stroke="#fff" stroke-width="1.500" /><path d="M7 5h7v3c0 3-7 3-7 0zM10.500 10v4M8.500 2v3M12.500 2v3" fill="#fff" stroke="#fff" stroke-width="1.400" /></svg>
        <svg width="16" height="15" viewBox="0 0 16 15"><path d="M1 5h2l4-4v13L3 10H1z" fill="#fff" /><circle cx="11" cy="10" r="4" fill="#ee3a30" stroke="#fff" stroke-width=".6" /><path d="M8.500 7.500l5 5" stroke="#fff" stroke-width="1.400" /></svg>
        <svg width="16" height="13" viewBox="0 0 16 13"><path d="M1 10h2v3H1zM4 8h2v5H4z" fill="#fff" /><path d="M7.500 5.500h1v7h-1zM10.500 3.500h1v9h-1zM13.500.500h1v12h-1z" fill="#777" stroke="#aaa" /></svg>
        <svg width="16" height="16" viewBox="0 0 16 16"><path d="M2 1v14" stroke="#fff" stroke-width="2" /><path d="M4 2c3-1 4 2 8 1v6c-4 1-5-2-8-1z" fill="#fff" /><circle cx="10.500" cy="11" r="4" fill="#ee3a30" /><path d="M8.500 9l4 4M12.500 9l-4 4" stroke="#fff" stroke-width="1.500" /></svg>
      </div>
      <time class="clock">19:23</time>
      <button class="peek" aria-label="Show desktop"></button>
    </nav>

    <svg class="marks" width="800" height="440" viewBox="0 0 800 440" fill="none" stroke="#ed1c24" stroke-width="5" aria-hidden="true">
      <rect x="22.500" y="156.500" width="771" height="272" />
      <rect x="238.500" y="84.500" width="45" height="31" />
      <rect x="382.500" y="54.500" width="33" height="30" />
      <rect x="384.500" y="86.500" width="35" height="30" />
      <path d="M267 117l62 38 54-51M329 155l54-88" stroke-width="5" />
    </svg>
  </div>
</template>

<style>
html,
body {
  margin: 0;
  overflow: hidden;
}
</style>

<style scoped>
.desktop {
  position: relative;
  display: flex;
  flex-direction: column;
  height: 100vh;
  overflow: hidden;
  font: 11px/14px "Open Sans", "Noto Sans", sans-serif;
  color: #3b3b3b;
  background: #dce0e8;
}
.desktop *,
.desktop *::before {
  box-sizing: border-box;
}
button,
input,
select {
  font: inherit;
  color: inherit;
  border: 0;
  margin: 0;
  padding: 0;
  background: none;
  outline: none;
}
button {
  display: flex;
  align-items: center;
  justify-content: center;
  flex: none;
  white-space: nowrap;
}
svg {
  flex: none;
  display: block;
}
.fill {
  flex: 1;
}
.dd {
  display: inline-block;
  flex: none;
  width: 0;
  height: 0;
  border: 3px solid transparent;
  border-top-color: #6c6c6c;
  border-bottom: 0;
  vertical-align: middle;
}
.dd.dark {
  border-top-color: #111;
}
.dd.pale {
  border-top-color: #8494a5;
}

/* title bar and tabs */
.top {
  height: 48px;
  flex: none;
  border-bottom: 1px solid #8f99a6;
  background:
    linear-gradient(to bottom, rgba(225, 239, 253, 0) 12px, rgba(225, 240, 254, 0.9) 27px, #fff 46px),
    radial-gradient(ellipse 8px 8px at 270px 17px, rgba(190, 190, 170, 0.6), transparent),
    radial-gradient(ellipse 28px 7px at 307px 16px, rgba(110, 140, 175, 0.4), transparent),
    radial-gradient(ellipse 10px 8px at 508px 15px, rgba(100, 125, 155, 0.5), transparent),
    radial-gradient(ellipse 36px 7px at 548px 16px, rgba(120, 150, 185, 0.4), transparent),
    linear-gradient(to right, #cfe1f4 0, #b9d4f1 200px, #a8cdf2 400px, #a5caef 700px, #567696 760px, #4b6885 1000px, #4d6c8b 1280px, #6e8cab 100%);
}
.titlebar {
  height: 24px;
  display: grid;
  grid-template-columns: 1fr auto 1fr;
  align-items: center;
}
.quick {
  display: flex;
  align-items: center;
  gap: 6px;
  height: 22px;
  padding-left: 1px;
}
.vline {
  width: 1px;
  height: 12px;
  background: #5f6e80;
}
.undo {
  margin-left: 2px;
}
.redo {
  margin-left: 3px;
}
.quick > .vline:nth-of-type(2) {
  margin-left: 1px;
}
.title {
  color: #000;
  font-size: 11px;
}
.winctl {
  justify-self: end;
  align-self: start;
  display: flex;
  height: 18px;
  margin-right: 3px;
  border: 1px solid #344252;
  border-top: 0;
  border-radius: 0 0 5px 5px;
  overflow: hidden;
}
.winctl button {
  width: 28px;
  background: linear-gradient(#b9c5d2, #8292a4 50%, #99a8b8);
  border-right: 1px solid #4a5a6c;
}
.winctl .close {
  width: 46px;
  border: 0;
  background: linear-gradient(#d9998a, #bd3d28 50%, #d05a3a);
}
.tabs {
  display: flex;
  height: 24px;
}
.tab {
  padding: 0 14px;
  color: #444;
}
.tab.file {
  width: 56px;
  margin-right: 4px;
  color: #fff;
  border: 1px solid #1c6321;
  border-bottom: 0;
  border-radius: 3px 3px 0 0;
  background: linear-gradient(#3f973e, #2a842d 50%, #4fae3d);
}
.tab.home {
  width: 56px;
  padding: 0;
  background: #fff;
  border: 1px solid #9aa5b3;
  border-bottom: 0;
  border-radius: 3px 3px 0 0;
}
.helpbar {
  display: flex;
  align-items: center;
  gap: 10px;
  padding-right: 5px;
}

/* ribbon */
.ribbon {
  display: flex;
  flex: none;
  height: 86px;
  background: linear-gradient(#fff, #fdfdfe 40%, #eceef2);
  border-bottom: 1px solid #84898f;
}
.group {
  display: flex;
  flex-direction: column;
  flex: none;
  border-right: 1px solid #c3c8ce;
}
.clipboard { width: 151px; }
.font { width: 209px; }
.align { width: 290px; }
.number { width: 143px; }
.styles { width: 175px; }
.cells { width: 135px; }
.editing { width: 177px; }
.body {
  flex: 1;
  display: flex;
  padding-top: 2px;
}
.caption {
  display: flex;
  align-items: center;
  height: 16px;
  padding-right: 5px;
  color: #6a7077;
}
.font .caption,
.align .caption,
.number .caption {
  padding-right: 6px;
}
.caption span {
  flex: 1;
  text-align: center;
}
.stack {
  display: flex;
  flex-direction: column;
  align-items: flex-start;
}
.stack button {
  height: 22px;
  gap: 3px;
}
.clipboard .stack {
  padding-left: 1px;
}
.stack .dd {
  margin-left: 2px;
}
.big {
  flex-direction: column;
  justify-content: flex-start;
  line-height: 13px;
  width: 42px;
}
.big > svg {
  margin: 2px 0 4px;
}
.big > .dd {
  margin-top: 4px;
}
.paste {
  width: 48px;
}
.rows {
  display: flex;
  flex-direction: column;
  gap: 3px;
}
.align .rows,
.font .rows,
.font .body,
.number .body {
  padding-top: 8px;
}
.align .body {
  padding-top: 0;
}
.row {
  display: flex;
  align-items: center;
  height: 26px;
}
.font .row {
  padding-left: 5px;
}
.combo {
  display: flex;
  align-items: center;
  height: 22px;
  border: 1px solid #c5cad1;
  background: #fff;
  color: #000;
}
.combo select {
  flex: 1;
  min-width: 0;
  height: 20px;
  padding-left: 2px;
  appearance: none;
}
.combo .dd {
  margin-right: 4px;
}
.fontname { width: 112px; }
.fontsize { width: 43px; border-left: 0; }
.numfmt { width: 134px; margin-left: 5px; }
.ib {
  width: 23px;
  height: 22px;
}
.grow {
  align-items: flex-start;
  width: 20px;
}
.grow.first {
  margin-left: 2px;
}
.serif {
  font-family: "Liberation Serif", serif;
  font-weight: bold;
  color: #222;
}
.s12 { font-size: 12px; line-height: 27px; }
.s14 { font-size: 14px; }
.s16 { font-size: 17px; line-height: 24px; }
.s20 { font-size: 20px; line-height: 10px; padding-bottom: 9px; }
.ital { font-style: italic; }
.under { text-decoration: underline; }
.borders,
.fillc,
.fontc {
  width: 32px;
}
.borders { margin-left: 16px; gap: 6px; }
.fillc { margin-left: 11px; gap: 4px; }
.fontc { margin-left: 1px; gap: 4px; }
.align .rows:first-child {
  padding-left: 5px;
}
.al {
  width: 23px;
  height: 23px;
}
.al.on {
  border: 1px solid #c29a40;
  border-radius: 3px;
  background: linear-gradient(#fdd882, #ffe173 50%, #ffd966);
}
.sep {
  width: 1px;
  height: 22px;
  margin: 0 3px;
  background: #cdd1d6;
}
.sep.tall {
  height: 54px;
  margin: 8px 5px 0 3px;
}
.wide {
  width: 36px;
  gap: 3px;
}
.txt {
  gap: 3px;
  margin-left: 2px;
}
.txt .dd {
  margin-left: 3px;
}
.money {
  width: 28px;
  gap: 5px;
  margin-left: 8px;
}
.pct {
  width: 28px;
  font-size: 13px;
  color: #222;
}
.styles .body { padding-left: 6px; }
.cond { width: 68px; }
.fat { width: 56px; }
.cst { width: 40px; }
.cells .body { padding-left: 4px; }
.editing .body { padding-left: 8px; }
.editing .stack { width: 80px; }

/* formula bar */
.formulabar {
  display: flex;
  flex: none;
  height: 25px;
  margin-top: 3px;
  border-top: 1px solid #8c929a;
  border-bottom: 4px solid #e3e6f0;
  background: #dde1e6;
}
.namebox {
  display: flex;
  align-items: center;
  width: 158px;
  border-bottom: 1px solid #8c929a;
  background: #fff;
}
.namebox input {
  flex: 1;
  min-width: 0;
  padding: 2px 6px 0 0;
  text-align: center;
  font-size: 12px;
  color: #000;
}
.big-dd {
  margin-right: 3px;
  border-width: 4px 4px 0;
  border-top-color: #333;
}
.fxzone {
  display: flex;
  align-items: center;
  justify-content: space-between;
  width: 85px;
  margin-left: 2px;
  padding: 0 6px 0 5px;
  border: 1px solid #8c929a;
  border-top: 0;
  border-radius: 10px 0 0 10px;
}
.knob {
  width: 9px;
  height: 9px;
  border-radius: 50%;
  background: linear-gradient(135deg, #b5bac1, #f5f6f8);
}
.fx {
  font: bold 14px/16px "Liberation Serif", serif;
  color: #333;
}
.fx small {
  font-size: 11px;
  font-style: italic;
}
.formula {
  flex: 1;
  min-width: 0;
  background: #fff;
  border-bottom: 1px solid #8c929a;
}
.expand {
  width: 17px;
  border: 1px solid #9aa0a8;
  border-top: 0;
}

/* grid */
.sheet {
  display: flex;
  flex: 1;
  min-height: 0;
  border-top: 1px solid #808791;
  background: #fff;
}
.gridwrap {
  flex: 1;
  min-width: 0;
  overflow: hidden;
}
.grid {
  width: 1380px;
  table-layout: fixed;
  border-collapse: separate;
  border-spacing: 0;
  font-family: "Open Sans", "Noto Sans", sans-serif;
  font-size: 13px;
  line-height: 17px;
}
.col-row { width: 26px; }
.col-a { width: 228px; }
.col-b { width: 142px; }
.col-c { width: 151px; }
.col-d { width: 129px; }
.col-std { width: 64px; }
.grid th,
.grid td {
  height: 20px;
  padding: 2px 0 0;
  text-align: center;
  vertical-align: middle;
  white-space: nowrap;
  border-right: 1px solid #dadcdd;
  border-bottom: 1px solid #dadcdd;
  color: #000;
}
.grid th {
  font-weight: normal;
  font-size: 12px;
  color: #333;
  background: #dfe2e6;
  border-color: #a9afb7;
}
.grid th.hot {
  background: linear-gradient(#fbd35e, #ffea70);
  border-color: #c78d33;
}
.grid .corner {
  background: linear-gradient(135deg, #dfe2e6 60%, #b5bac1 60%);
}
.grid td.filled {
  border-color: #000;
}
.grid td.active {
  position: relative;
}
.grid td.active::before {
  content: "";
  position: absolute;
  inset: -2px;
  border: 3px solid #111;
  border-left: 1px solid #111;
  box-shadow: inset 1px 0 0 #fff, inset 2px 0 0 #111;
}
.grid td.active::after {
  content: "";
  position: absolute;
  right: -3px;
  bottom: -3px;
  width: 5px;
  height: 5px;
  background: #111;
  border: solid #fff;
  border-width: 1px 0 0 1px;
  box-sizing: content-box;
}
.vscroll {
  display: flex;
  flex-direction: column;
  width: 20px;
  flex: none;
  border-right: 4px solid #e9ebef;
  background: #dce0e6;
}
.split {
  height: 8px;
  border: 1px solid #777d86;
  background: linear-gradient(#70767f, #70767f) center / 8px 1px no-repeat #fff;
}
.vscroll button {
  height: 16px;
}
.vthumb {
  flex: 95;
  display: flex;
  align-items: center;
  justify-content: center;
  border: 1px solid #8b929c;
  border-radius: 2px;
  background: linear-gradient(to right, #f6f8fa, #dce0e7);
}
.vthumb i {
  width: 8px;
  height: 8px;
  background: repeating-linear-gradient(#707780 0 1px, transparent 1px 2px);
}
.vtrack {
  flex: 4;
}

/* sheet tabs */
.sheettabs {
  display: flex;
  flex: none;
  height: 17px;
  border-top: 1px solid #8f969f;
  background: #dce0e8;
}
.navs {
  display: flex;
  width: 63px;
  padding-left: 1px;
  border-right: 1px solid #9ba2ab;
}
.navs button {
  width: 15px;
}
.stab {
  padding: 0 4px 0 9px;
  font: bold 12px/16px "Open Sans", sans-serif;
  color: #444c56;
  background: #fff;
}
.hscroll {
  display: flex;
  width: 538px;
  margin-right: 20px;
}
.hsplit {
  width: 8px;
  border: 1px solid #777d86;
  background: linear-gradient(#70767f, #70767f) center / 1px 8px no-repeat #fff;
}
.hscroll button {
  width: 17px;
}
.hthumb {
  flex: 12;
  display: flex;
  align-items: center;
  justify-content: center;
  border: 1px solid #8b929c;
  border-radius: 2px;
  background: linear-gradient(#f6f8fa, #dce0e7);
}
.hthumb i {
  width: 8px;
  height: 7px;
  background: repeating-linear-gradient(to right, #707780 0 1px, transparent 1px 2px);
}
.htrack {
  flex: 1;
}

/* status bar */
.status {
  display: flex;
  align-items: center;
  flex: none;
  height: 21px;
  padding-right: 4px;
  border-top: 1px solid #8f969f;
  background: linear-gradient(#e4e7eb, #cdd1d6 50%, #b9bec3);
}
.ready {
  width: 48px;
  padding-left: 8px;
}
.vsep {
  width: 2px;
  height: 19px;
  border-left: 1px solid #8f959c;
  border-right: 1px solid #eef0f3;
}
.view {
  width: 19px;
  height: 18px;
}
.view.on {
  margin-left: 4px;
  border: 1px solid #c28a30;
  border-radius: 2px;
  background: #ffdf76;
}
.pct-btn {
  width: 44px;
  padding-right: 2px;
}
.pct-btn + .circle {
  margin-left: 1px;
}
.circle {
  width: 16px;
}
.zoom {
  width: 100px;
  height: 16px;
  appearance: none;
  background: linear-gradient(#747a82, #747a82) center / 100% 1px no-repeat;
}
.zoom::-webkit-slider-thumb {
  appearance: none;
  width: 9px;
  height: 12px;
  border: 1px solid #666c74;
  border-radius: 1px 1px 5px 5px;
  background: #f5f6f8;
}

/* taskbar */
.taskbar {
  display: flex;
  align-items: center;
  flex: none;
  height: 30px;
  border-top: 1px solid #20262c;
  box-shadow: inset 0 1px 0 #8c98a2;
  background:
    radial-gradient(ellipse 40px 22px at 770px 16px, #14171b, transparent),
    radial-gradient(ellipse 30px 20px at 985px 12px, #23303d, transparent),
    radial-gradient(ellipse 60px 20px at 1120px 16px, #37352e, transparent),
    linear-gradient(to right, #28333e 0, #141c24 60px, #18212a 150px, #3a4046 240px, #5c5e60 300px, #6a6866 360px, #3c3d3e 430px, #2c3640 520px, #26394c 570px, #3f5a74 600px, #6f93b4 630px, #6687a3 680px, #4f4a42 710px, #3b332b 740px, #4a4a48 800px, #85857e 840px, #52575a 870px, #46525d 930px, #676b67 1020px, #585a55 1050px, #1d1b18 1085px, #75705f 1130px, #47453c 1160px, #24231f 1230px, #34322c 1280px, #0d0e10 1320px, #15181a 100%);
}
.start {
  position: relative;
  width: 60px;
  height: 29px;
}
.start svg {
  position: absolute;
  left: 8px;
  top: -6px;
}
.apps {
  display: flex;
  gap: 4px;
}
.apps button {
  width: 42px;
  height: 28px;
  border-radius: 2px;
}
.apps .open {
  border: 1px solid #aab0b5;
  background: linear-gradient(150deg, rgba(255, 255, 255, 0.5), rgba(255, 255, 255, 0.2) 50%, rgba(255, 255, 255, 0.1) 51%, rgba(255, 255, 255, 0.25));
}
.apps .lit {
  background: linear-gradient(150deg, rgba(255, 255, 255, 0.5), rgba(255, 255, 255, 0.22));
}
.apps .bright {
  border-color: #e8ebed;
  background: linear-gradient(#d6dadd, #9ba1a6 50%, #b6babd);
}
.tray {
  display: flex;
  align-items: center;
  gap: 9px;
  color: #fff;
}
.lang {
  margin-right: 9px;
  padding-bottom: 6px;
}
.tray svg:nth-of-type(2) {
  margin-left: 2px;
}
.clock {
  margin: 0 27px 0 30px;
  color: #fff;
  font-size: 12px;
}
.peek {
  width: 14px;
  height: 29px;
  border: 1px solid #7a7d7f;
  background: linear-gradient(135deg, #8a8c8d, #2c2f31 60%);
}

.marks {
  position: absolute;
  left: 0;
  top: 0;
  pointer-events: none;
}
</style>
